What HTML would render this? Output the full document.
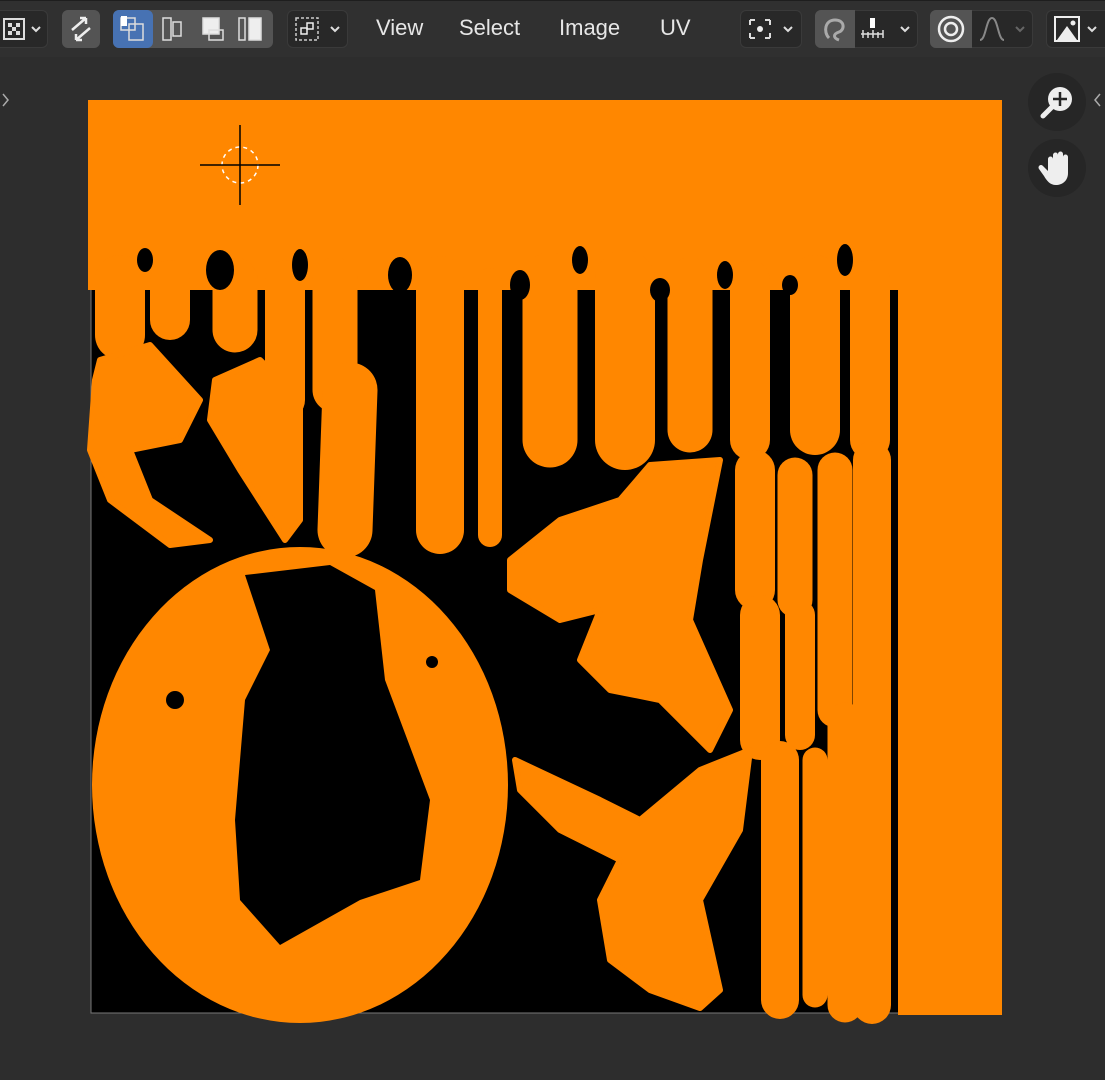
<!DOCTYPE html>
<html><head><meta charset="utf-8"><style>
html,body{margin:0;padding:0;width:1105px;height:1080px;overflow:hidden;background:#2d2d2d;font-family:"Liberation Sans","DejaVu Sans",sans-serif}
.hdr{position:absolute;left:0;top:0;width:1105px;height:56px;background:#303030;border-top:1px solid #1e1e1e}
.b{position:absolute;top:9px;height:38px;background:#282828;border-radius:6px;box-sizing:border-box;border:1px solid #3a3a3a}
.g{background:#545454;border-color:#545454}
.m{position:absolute;top:14px;color:#e6e6e6;font-size:22px}
.circ{position:absolute;width:58px;height:58px;border-radius:50%;background:#262626}
</style></head><body>
<div class="hdr">
  <div class="b" style="left:-6px;width:54px"></div>
  <svg style="position:absolute;left:2px;top:15px" width="46" height="28"><rect x="2" y="3" width="20" height="20" fill="none" stroke="#ddd" stroke-width="2"/><path d="M6 7h4v4h-4zM14 7h4v4h-4zM10 11h4v4h-4zM6 15h4v4h-4zM14 15h4v4h-4z" fill="#ddd"/><path d="M30 11l4 4 4-4" stroke="#ddd" stroke-width="2" fill="none"/></svg>
  <div class="b g" style="left:62px;width:38px"></div>
  <svg style="position:absolute;left:62px;top:9px" width="38" height="38"><path d="M10 20l14-12M24 8h-6M24 8v6M28 18l-14 12M14 30h6M14 30v-6" stroke="#eee" stroke-width="2.5" fill="none"/></svg>
  <div class="b g" style="left:113px;width:160px"></div>
  <div class="b" style="left:113px;width:40px;background:#4772b3;border-color:#4772b3"></div>
  <svg style="position:absolute;left:113px;top:9px" width="160" height="38"><g fill="none" stroke="#ddd" stroke-width="1.5"><rect x="8" y="8" width="14" height="12"/><rect x="16" y="14" width="14" height="16"/><rect x="50" y="8" width="8" height="22"/><rect x="60" y="12" width="8" height="14"/><rect x="90" y="8" width="16" height="16" fill="#eee"/><rect x="96" y="20" width="14" height="10"/><rect x="126" y="8" width="6" height="22"/><rect x="136" y="8" width="12" height="22" fill="#eee"/></g><rect x="8" y="6" width="6" height="10" fill="#fff"/></svg>
  <div class="b" style="left:287px;width:61px"></div>
  <svg style="position:absolute;left:287px;top:9px" width="61" height="38"><rect x="9" y="8" width="22" height="22" fill="none" stroke="#ccc" stroke-width="1.5" stroke-dasharray="3 2"/><rect x="14" y="18" width="6" height="6" fill="none" stroke="#eee" stroke-width="1.5"/><rect x="20" y="13" width="6" height="6" fill="none" stroke="#eee" stroke-width="1.5"/><path d="M44 17l4 4 4-4" stroke="#ddd" stroke-width="2" fill="none"/></svg>
  <div class="m" style="left:376px">View</div>
  <div class="m" style="left:459px">Select</div>
  <div class="m" style="left:559px">Image</div>
  <div class="m" style="left:660px">UV</div>
  <div class="b" style="left:740px;width:62px"></div>
  <svg style="position:absolute;left:740px;top:9px" width="62" height="38"><path d="M10 10h5M10 10v5M30 10h-5M30 10v5M10 28h5M10 28v-5M30 28h-5M30 28v-5" stroke="#ddd" stroke-width="2" fill="none"/><circle cx="20" cy="19" r="3" fill="#eee"/><path d="M44 17l4 4 4-4" stroke="#ddd" stroke-width="2" fill="none"/></svg>
  <div class="b" style="left:815px;width:103px"></div>
  <div class="b g" style="left:815px;width:40px;border-radius:6px 0 0 6px"></div>
  <svg style="position:absolute;left:815px;top:9px" width="103" height="38"><path d="M14 28c-6-6-4-18 6-18s10 10 4 12-6 6 0 8" stroke="#aaa" stroke-width="3" fill="none"/><path d="M46 24h22M48 20v8M53 22v6M58 20v8M63 22v6M68 20v8" stroke="#ddd" stroke-width="1.5"/><rect x="55" y="8" width="5" height="10" fill="#fff"/><path d="M86 17l4 4 4-4" stroke="#ddd" stroke-width="2" fill="none"/></svg>
  <div class="b" style="left:930px;width:103px"></div>
  <div class="b g" style="left:930px;width:42px;border-radius:6px 0 0 6px"></div>
  <svg style="position:absolute;left:930px;top:9px" width="103" height="38"><circle cx="21" cy="19" r="12" fill="none" stroke="#eee" stroke-width="2.5"/><circle cx="21" cy="19" r="6" fill="none" stroke="#eee" stroke-width="2.5"/><path d="M50 30c6 0 6-22 12-22s6 22 12 22" stroke="#888" stroke-width="2" fill="none"/><path d="M86 17l4 4 4-4" stroke="#666" stroke-width="2" fill="none"/></svg>
  <div class="b" style="left:1046px;width:70px"></div>
  <svg style="position:absolute;left:1046px;top:9px" width="59" height="38"><rect x="9" y="7" width="24" height="24" fill="none" stroke="#eee" stroke-width="2"/><path d="M11 30l10-14 10 14z" fill="#eee"/><circle cx="27" cy="13" r="2.5" fill="#eee"/><path d="M42 17l4 4 4-4" stroke="#ddd" stroke-width="2" fill="none"/></svg>
</div>
<svg style="position:absolute;left:0;top:88px" width="12" height="24"><path d="M3 6l5 6-5 6" stroke="#aaa" stroke-width="1.5" fill="none"/></svg>
<div class="circ" style="left:1028px;top:73px"></div>
<div class="circ" style="left:1028px;top:139px"></div>
<svg style="position:absolute;left:1028px;top:73px" width="58" height="58"><circle cx="32" cy="26" r="12" fill="#eee"/><path d="M24 34l-9 9" stroke="#eee" stroke-width="5" stroke-linecap="round"/><path d="M32 19v14M25 26h14" stroke="#262626" stroke-width="2.5"/></svg>
<svg style="position:absolute;left:1028px;top:139px" width="58" height="58"><path d="M20 32v-12a2.5 2.5 0 015 0v8-12a2.5 2.5 0 015 0v12-13a2.5 2.5 0 015 0v13-10a2.5 2.5 0 015 0v16c0 8-6 12-12 12s-9-4-12-9l-5-7a2.5 2.5 0 014-3z" fill="#eee"/></svg>
<svg style="position:absolute;left:1090px;top:88px" width="15" height="24"><path d="M10 6l-5 6 5 6" stroke="#aaa" stroke-width="1.5" fill="none"/></svg>

<svg style="position:absolute;left:0;top:0" width="1105" height="1080">
<rect x="91" y="104" width="909" height="909" fill="#000" stroke="#777" stroke-width="1"/>
<g fill="#ff8700" stroke="#ff8700" stroke-linecap="round" stroke-linejoin="round">
<rect x="88" y="100" width="914" height="190" stroke="none"/>
<rect x="898" y="100" width="104" height="915" stroke="none"/>
<g fill="none">
<path d="M120 280V335" stroke-width="50"/>
<path d="M170 280V320" stroke-width="40"/>
<path d="M235 280V330" stroke-width="45"/>
<path d="M285 280V400" stroke-width="40"/>
<path d="M335 280V390" stroke-width="45"/>
<path d="M350 390L345 530" stroke-width="55"/>
<path d="M440 280V530" stroke-width="48"/>
<path d="M490 280V535" stroke-width="24"/>
<path d="M550 280V440" stroke-width="55"/>
<path d="M625 280V440" stroke-width="60"/>
<path d="M690 280V430" stroke-width="45"/>
<path d="M750 280V440" stroke-width="40"/>
<path d="M815 280V430" stroke-width="50"/>
<path d="M870 280V440" stroke-width="40"/>
<path d="M755 470V590" stroke-width="40"/>
<path d="M795 475V600" stroke-width="35"/>
<path d="M835 470V710" stroke-width="35"/>
<path d="M872 460V1005" stroke-width="38"/>
<path d="M760 615V740" stroke-width="40"/>
<path d="M800 615V735" stroke-width="30"/>
<path d="M845 720V1005" stroke-width="35"/>
<path d="M780 760V1000" stroke-width="38"/>
<path d="M815 760V995" stroke-width="25"/>
</g>
<path stroke-width="6" d="M100 360L150 345L200 400L180 440L130 450L150 500L210 540L170 545L110 500L90 450L95 380Z"/>
<path stroke-width="6" d="M215 380L260 360L300 400L300 520L285 540L240 470L210 420Z"/>
<ellipse cx="300" cy="785" rx="208" ry="238" stroke="none"/>
<path stroke-width="6" d="M510 560L560 520L620 500L650 465L720 460L700 560L690 620L730 710L710 750L660 700L610 690L580 660L600 610L560 620L510 590Z"/>
<path stroke-width="6" d="M515 760L600 800L640 820L700 770L750 750L740 830L700 900L720 990L700 1008L650 990L610 960L600 900L620 860L560 830L520 790Z"/>
</g>
<path fill="#000" d="M245 575L330 565L375 590L385 680L430 800L420 880L360 900L280 945L240 900L235 820L245 700L270 650Z"/>
<circle cx="175" cy="700" r="9" fill="#000"/>
<circle cx="432" cy="662" r="6" fill="#000"/>
<g fill="#000">
<ellipse cx="220" cy="270" rx="14" ry="20"/><ellipse cx="400" cy="275" rx="12" ry="18"/><ellipse cx="520" cy="285" rx="10" ry="15"/><ellipse cx="580" cy="260" rx="8" ry="14"/><ellipse cx="660" cy="290" rx="10" ry="12"/><ellipse cx="725" cy="275" rx="8" ry="14"/><ellipse cx="845" cy="260" rx="8" ry="16"/><ellipse cx="145" cy="260" rx="8" ry="12"/><ellipse cx="300" cy="265" rx="8" ry="16"/><ellipse cx="790" cy="285" rx="8" ry="10"/>
</g>
<circle cx="240" cy="165" r="18" fill="none" stroke="#fff" stroke-width="1.5" stroke-dasharray="4 4"/>
<path d="M200 165h80M240 125v80" stroke="#000" stroke-width="1.5"/>
</svg>
</body></html>
